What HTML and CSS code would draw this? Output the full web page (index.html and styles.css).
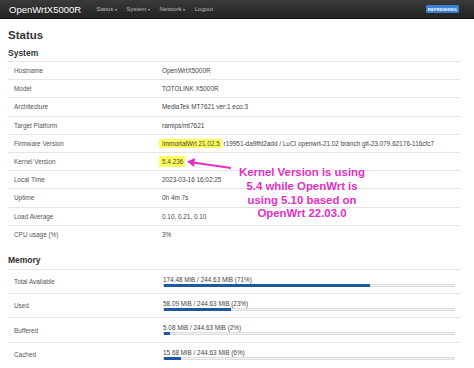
FILE: index.html
```html
<!DOCTYPE html>
<html lang="en">
<head>
    <meta charset="UTF-8">
    <title>OpenWrtX5000R - Status</title>
    <link rel="stylesheet" href="styles.css">
</head>
<body>
    <!-- Navbar -->
    <nav class="navbar">
        <span class="brand">OpenWrtX5000R</span>
        <ul class="menu">
            <li>Status <span class="caret">&#9662;</span></li>
            <li>System <span class="caret">&#9662;</span></li>
            <li>Network <span class="caret">&#9662;</span></li>
            <li>Logout</li>
        </ul>
        <span class="badge">REFRESHING</span>
    </nav>

    <!-- Main Content -->
    <div class="main">
        <h2>Status</h2>

        <h3>System</h3>
        <div class="table">
            <div class="row"><div class="label">Hostname</div><div class="value">OpenWrtX5000R</div></div>
            <div class="row"><div class="label">Model</div><div class="value">TOTOLINK X5000R</div></div>
            <div class="row"><div class="label">Architecture</div><div class="value">MediaTek MT7621 ver:1 eco:3</div></div>
            <div class="row"><div class="label">Target Platform</div><div class="value">ramips/mt7621</div></div>
            <div class="row"><div class="label">Firmware Version</div><div class="value"><span class="mark">ImmortalWrt 21.02.5</span> r19951-da9ffd2add / LuCI openwrt-21.02 branch git-23.079.62176-116cfc7</div></div>
            <div class="row"><div class="label">Kernel Version</div><div class="value"><span class="mark tall">5.4.236</span></div></div>
            <div class="row"><div class="label">Local Time</div><div class="value">2023-03-16 16:02:25</div></div>
            <div class="row"><div class="label">Uptime</div><div class="value">0h 4m 7s</div></div>
            <div class="row"><div class="label">Load Average</div><div class="value">0.10, 0.21, 0.10</div></div>
            <div class="row"><div class="label">CPU usage (%)</div><div class="value">3%</div></div>
        </div>

        <h3 class="memory-title">Memory</h3>
        <div class="table">
            <div class="row mem"><div class="label">Total Available</div><div class="value">174.48 MiB / 244.63 MiB (71%)<div class="bar"><div class="fill" style="width: 71%"></div></div></div></div>
            <div class="row mem"><div class="label">Used</div><div class="value">58.09 MiB / 244.63 MiB (23%)<div class="bar"><div class="fill" style="width: 23%"></div></div></div></div>
            <div class="row mem"><div class="label">Buffered</div><div class="value">5.08 MiB / 244.63 MiB (2%)<div class="bar"><div class="fill" style="width: 2%"></div></div></div></div>
            <div class="row mem"><div class="label">Cached</div><div class="value">15.68 MiB / 244.63 MiB (6%)<div class="bar"><div class="fill" style="width: 6%"></div></div></div></div>
        </div>
    </div>

    <!-- Annotation overlay -->
    <svg class="arrow" width="46" height="12" viewBox="0 0 46 12">
        <line x1="44" y1="9" x2="6" y2="3.5" stroke="#e52fc3" stroke-width="2"/>
        <polygon points="0,2.5 8,-1 7,8" fill="#e52fc3"/>
    </svg>
    <div class="note">Kernel Version is using<br>5.4 while OpenWrt is<br>using 5.10 based on<br>OpenWrt 22.03.0</div>
</body>
</html>
```

FILE: styles.css
```css
/* General body styling */
body {
    font-family: 'Liberation Sans', Arial, sans-serif;
    background-color: #fff;
    margin: 0;
    padding: 0;
    color: #444;
    position: relative;
}

/* Navbar styling */
.navbar {
    height: 19px;
    display: flex;
    align-items: center;
    padding: 0 15px 0 9px;
    background: linear-gradient(#3a3a3a, #222);
    border-bottom: 1px solid #111;
    box-sizing: border-box;
}

.brand {
    color: #fff;
    font-size: 9.5px;
    margin-right: 15px;
}

.menu {
    list-style: none;
    margin: 0;
    padding: 0;
    display: flex;
    gap: 9.5px;
    flex: 1;
}

.menu li {
    color: #bbb;
    font-size: 6px;
}

.caret {
    font-size: 4px;
}

.badge {
    background-color: #3c7fd0;
    color: #fff;
    font-size: 4.3px;
    font-weight: bold;
    padding: 1.5px 2px;
    border-radius: 1.5px;
    letter-spacing: 0.1px;
}

/* Main content */
.main {
    padding: 0 14px 0 8px;
}

h2 {
    font-size: 11.5px;
    line-height: 14px;
    margin: 9px 0 6px;
    color: #333;
}

h3 {
    font-size: 8.5px;
    line-height: 10px;
    margin: 0 0 3px;
    color: #333;
}

.memory-title {
    margin: 12px 0 4px;
}

/* Tables */
.row {
    display: grid;
    grid-template-columns: 154px 1fr;
    height: 18.2px;
    align-items: center;
    border-top: 1px solid #e4e4e4;
    box-sizing: border-box;
    font-size: 6.4px;
}

.label {
    padding-left: 6px;
    color: #555;
}

.value {
    white-space: nowrap;
    color: #444;
}

.mark {
    background-color: #ffff5a;
    padding: 1px 2px 1px 3px;
    margin-left: -3px;
}

.mark.tall {
    padding: 2px 2px 2px 3px;
}

.row.mem {
    height: 24.3px;
}

.row.mem .value {
    padding: 6px 5px 0 1px;
    align-self: start;
}

.bar {
    margin-top: 1px;
    height: 3px;
    background-color: #f2f2f2;
    border: 1px solid #ddd;
    box-sizing: border-box;
    position: relative;
}

.fill {
    height: 3px;
    margin-top: -1px;
    background-color: #1d57a6;
}

/* Annotation */
.arrow {
    position: absolute;
    left: 187px;
    top: 159px;
    overflow: visible;
}

.note {
    position: absolute;
    left: 302px;
    top: 166px;
    transform: translateX(-50%);
    text-align: center;
    white-space: nowrap;
    font-size: 11.4px;
    line-height: 13.8px;
    font-weight: bold;
    color: #e52fc3;
}
```
